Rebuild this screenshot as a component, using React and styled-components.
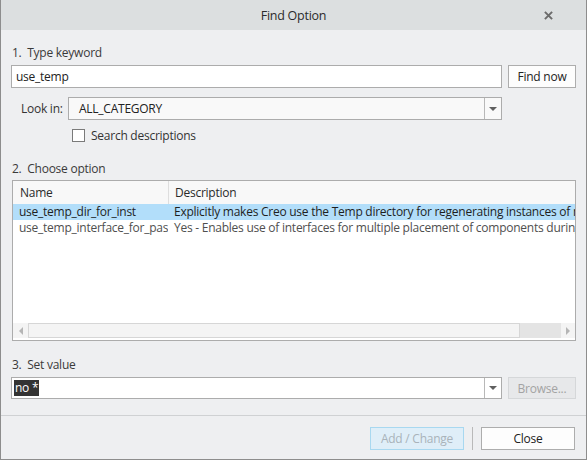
import styled, { createGlobalStyle } from 'styled-components';

const GlobalStyle = createGlobalStyle`
  * { box-sizing: border-box; }
  html, body { margin: 0; padding: 0; background: #ffffff; }
  body {
    font-family: "Open Sans", "Noto Sans", sans-serif;
    font-size: 12px;
    letter-spacing: -0.25px;
    color: #333;
  }
`;

const Window = styled.div`
  width: 587px;
  height: 460px;
  display: flex;
  flex-direction: column;
  background: #eeeff1;
  border: 1px solid #8d8d8d;
  border-top: none;
  overflow: hidden;
`;

const TitleBar = styled.div`
  height: 30px;
  flex: none;
  display: grid;
  grid-template-columns: 1fr auto 1fr;
  align-items: center;
  background: #dcdfe0;
  font-size: 12.5px;
  color: #2b2b2b;
`;

const Title = styled.div`
  grid-column: 2;
  padding-top: 1px;
`;

const CloseBtn = styled.div`
  justify-self: end;
  width: 14px;
  height: 14px;
  margin-right: 31px;
  display: flex;
  align-items: center;
  justify-content: center;
`;

const Body = styled.div`
  flex: none;
  display: flex;
  flex-direction: column;
  padding: 0 10px;
`;

const SectionLabel = styled.div`
  height: 16px;
  line-height: 16px;
  margin-top: ${(p) => p.$top}px;
  padding-left: 1px;
  color: #3a3a3a;
  white-space: pre;
`;

const Row = styled.div`
  display: grid;
  grid-template-columns: ${(p) => p.$cols};
  column-gap: 6px;
  align-items: center;
  margin-top: ${(p) => p.$top}px;
  padding-left: ${(p) => p.$pad || 0}px;
`;

const TextBox = styled.div`
  height: ${(p) => p.$h}px;
  background: #fff;
  border: 1px solid #acacac;
  display: flex;
  align-items: center;
  padding-left: 4px;
  color: #222;
`;

const Button = styled.div`
  height: ${(p) => p.$h}px;
  display: flex;
  align-items: center;
  justify-content: center;
  border: 1px solid ${(p) => (p.$disabled ? '#d5d7d9' : '#adadad')};
  background: ${(p) => (p.$disabled ? '#e7e8ea' : '#fdfdfd')};
  color: ${(p) => (p.$disabled ? '#a3a3a3' : '#222')};
`;

const Combo = styled.div`
  height: ${(p) => p.$h}px;
  display: grid;
  grid-template-columns: 1fr 17px;
  background: ${(p) => p.$bg};
  border: 1px solid #acacac;
`;

const ComboValue = styled.div`
  display: flex;
  align-items: center;
  padding-left: ${(p) => p.$pad}px;
  color: #222;
`;

const ComboArrow = styled.div`
  border-left: 1px solid #b8b8b8;
  display: flex;
  align-items: center;
  justify-content: center;
  &::after {
    content: '';
    border-left: 4px solid transparent;
    border-right: 4px solid transparent;
    border-top: 4px solid #606060;
  }
`;

const LookLabel = styled.div`
  color: #333;
  white-space: nowrap;
`;

const CheckRow = styled.label`
  display: flex;
  align-items: center;
  gap: 6px;
  margin-top: 8px;
  padding-left: 61px;
  height: 14px;
  color: #333;
`;

const CheckBox = styled.span`
  width: 13px;
  height: 13px;
  border: 1px solid #7a7a7a;
  background: #fff;
`;

const Selected = styled.span`
  background: #333;
  color: #fff;
  padding: 0 1px;
  line-height: 16px;
`;

const ListBox = styled.div`
  height: 161px;
  margin-top: 3px;
  margin-left: 1px;
  border: 1px solid #acacac;
  background: #fff;
  display: flex;
  flex-direction: column;
`;

const ListGrid = styled.div`
  flex: 1;
  display: grid;
  grid-template-columns: 155px 1fr;
  grid-template-rows: 23px;
  grid-auto-rows: 16px;
  align-content: start;
  overflow: hidden;
`;

const HeadCell = styled.div`
  display: flex;
  align-items: center;
  padding-left: ${(p) => p.$pad}px;
  background: #f8f8f8;
  border-left: ${(p) => (p.$divider ? '1px solid #dedede' : 'none')};
  color: #2a2a2a;
`;

const Cell = styled.div`
  line-height: 16px;
  padding-left: ${(p) => p.$pad}px;
  white-space: nowrap;
  overflow: hidden;
  background: ${(p) => (p.$sel ? '#b2defa' : 'transparent')};
  color: ${(p) => (p.$sel ? '#1e1e1e' : '#4f4f4f')};
`;

const HScroll = styled.div`
  height: 15px;
  margin: 0 0 2px 0;
  display: grid;
  grid-template-columns: 15px 492px 1fr 14px;
  background: #e4e4e4;
`;

const ScrollArrow = styled.div`
  background: #f4f4f4;
  display: flex;
  align-items: center;
  justify-content: center;
  &::after {
    content: '';
    border-top: 4px solid transparent;
    border-bottom: 4px solid transparent;
    ${(p) => (p.$dir === 'left' ? 'border-right: 4px solid #b5b5b5;' : 'border-left: 4px solid #b5b5b5;')}
  }
`;

const Thumb = styled.div`
  background: #f4f4f4;
  border: 1px solid #d6d6d6;
`;

const Footer = styled.div`
  margin-top: 16px;
  border-top: 1px solid #cfd1d3;
  padding: 11px 11px 0 0;
  display: flex;
  justify-content: flex-end;
  align-items: center;
  gap: 8px;
`;

const FootButton = styled(Button)`
  width: 94px;
  height: 23px;
  border-color: ${(p) => (p.$disabled ? '#a8d8f0' : '#adadad')};
  background: ${(p) => (p.$disabled ? '#dfeef8' : '#fdfdfd')};
  color: ${(p) => (p.$disabled ? '#a9b3ba' : '#222')};
`;

const VDivider = styled.div`
  width: 1px;
  height: 23px;
  background: #b9b9b9;
`;

const rows = [
  {
    name: 'use_temp_dir_for_inst',
    desc: 'Explicitly makes Creo use the Temp directory for regenerating instances of models',
    sel: true,
  },
  {
    name: 'use_temp_interface_for_paste',
    desc: 'Yes - Enables use of interfaces for multiple placement of components during paste',
    sel: false,
  },
];

export default function App() {
  return (
    <>
      <GlobalStyle />
      <Window>
        <TitleBar>
          <Title>Find Option</Title>
          <CloseBtn>
            <svg width="9" height="9" viewBox="0 0 10 10">
              <path d="M1 1 L9 9 M9 1 L1 9" stroke="#6b6b6b" strokeWidth="2.2" />
            </svg>
          </CloseBtn>
        </TitleBar>
        <Body>
          <SectionLabel $top={15}>1.  Type keyword</SectionLabel>
          <Row $cols="1fr 68px" $top={4}>
            <TextBox $h={23}>use_temp</TextBox>
            <Button $h={23}>Find now</Button>
          </Row>
          <Row $cols="41px 1fr 68px" $top={9} $pad={10}>
            <LookLabel>Look in:</LookLabel>
            <Combo $h={23} $bg="#f9f9f9">
              <ComboValue $pad={10}>ALL_CATEGORY</ComboValue>
              <ComboArrow />
            </Combo>
            <span />
          </Row>
          <CheckRow>
            <CheckBox />
            Search descriptions
          </CheckRow>
          <SectionLabel $top={19}>2.  Choose option</SectionLabel>
          <ListBox>
            <ListGrid>
              <HeadCell $pad={7}>Name</HeadCell>
              <HeadCell $pad={6} $divider>Description</HeadCell>
              {rows.flatMap((r) => [
                <Cell key={r.name} $pad={6} $sel={r.sel}>{r.name}</Cell>,
                <Cell key={r.name + '-d'} $pad={6} $sel={r.sel}>{r.desc}</Cell>,
              ])}
            </ListGrid>
            <HScroll>
              <ScrollArrow $dir="left" />
              <Thumb />
              <span />
              <ScrollArrow $dir="right" />
            </HScroll>
          </ListBox>
          <SectionLabel $top={16}>3.  Set value</SectionLabel>
          <Row $cols="1fr 68px" $top={4}>
            <Combo $h={22} $bg="#ffffff">
              <ComboValue $pad={2}>
                <Selected>no *</Selected>
              </ComboValue>
              <ComboArrow />
            </Combo>
            <Button $h={22} $disabled>Browse...</Button>
          </Row>
        </Body>
        <Footer>
          <FootButton $disabled>Add / Change</FootButton>
          <VDivider />
          <FootButton>Close</FootButton>
        </Footer>
      </Window>
    </>
  );
}
